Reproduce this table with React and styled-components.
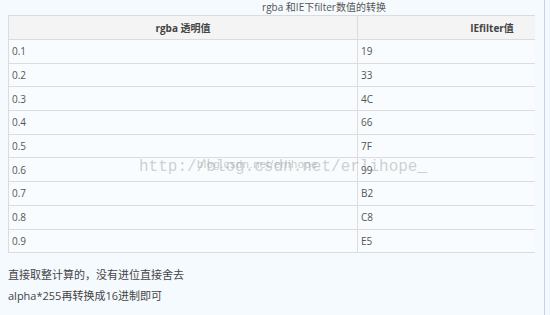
import React from 'react';
import styled, { createGlobalStyle } from 'styled-components';

const GlobalStyle = createGlobalStyle`
  html, body {
    margin: 0;
    padding: 0;
    background: #f5faff;
  }
  body {
    font-family: "Open Sans", "Noto Sans CJK SC", sans-serif;
    color: #555;
  }
`;

const Page = styled.div`
  position: relative;
  width: 550px;
  height: 315px;
  overflow: hidden;
  background: #f5faff;
  border-right: 1px solid #eef4fb;
  box-sizing: border-box;
`;

const ScrollEdge = styled.div`
  position: absolute;
  top: 0;
  bottom: 0;
  left: 544px;
  width: 1px;
  background: #c5d5f0;
`;

const Content = styled.div`
  width: 527px;
  padding: 0 0 0 8px;
  overflow: hidden;
`;

const Caption = styled.div`
  width: 616px;
  padding-left: 16px;
  box-sizing: border-box;
  text-align: center;
  font-size: 10px;
  line-height: 15px;
  height: 15px;
  color: #555;
`;

const Table = styled.table`
  width: 616px;
  border-collapse: collapse;
  table-layout: fixed;
  font-size: 10px;
  color: #555;
`;

const Head = styled.th`
  height: 23px;
  padding: 0;
  background: #f4f4f4;
  border: 1px solid #dcdcdc;
  font-weight: bold;
  color: #444;
  text-align: center;
  width: ${p => p.$w}px;
`;

const Cell = styled.td`
  height: 22.7px;
  padding: 0 0 0 3px;
  border: 1px solid #dcdcdc;
  background: #f8fcff;
  text-align: left;
`;

const Notes = styled.div`
  padding: 11px 0 0 8px;
  font-size: 11px;
  line-height: 21px;
  color: #444;
`;

const Watermark = styled.div`
  position: absolute;
  left: 139px;
  top: 158px;
  font-family: "Liberation Mono", monospace;
  font-size: 16px;
  color: rgba(150, 150, 150, 0.45);
  white-space: nowrap;
  pointer-events: none;
`;

const WatermarkSmall = styled.div`
  position: absolute;
  left: 197px;
  top: 158px;
  font-family: "Liberation Sans", sans-serif;
  font-size: 11px;
  letter-spacing: 0.6px;
  color: rgba(150, 150, 150, 0.5);
  white-space: nowrap;
  pointer-events: none;
`;

const rows = [
  ['0.1', '19'],
  ['0.2', '33'],
  ['0.3', '4C'],
  ['0.4', '66'],
  ['0.5', '7F'],
  ['0.6', '99'],
  ['0.7', 'B2'],
  ['0.8', 'C8'],
  ['0.9', 'E5'],
];

const App = () => {
  return (<>
    <GlobalStyle />
    <Page>
      <Content>
        <Caption>{'rgba 和IE下filter数值的转换'}</Caption>
        <Table>
          <thead>
            <tr>
              <Head $w={348}>{'rgba 透明值'}</Head>
              <Head $w={268}>{'IEfilter值'}</Head>
            </tr>
          </thead>
          <tbody>
            {rows.map(([a, b]) => (
              <tr key={a}>
                <Cell>{a}</Cell>
                <Cell>{b}</Cell>
              </tr>
            ))}
          </tbody>
        </Table>
      </Content>
      <Notes>
        <div>{'直接取整计算的，没有进位直接舍去'}</div>
        <div>{'alpha*255再转换成16进制即可'}</div>
      </Notes>
      <Watermark>{'http://blog.csdn.net/erlihope_'}</Watermark>
      <WatermarkSmall>{'blog.csdn.net/erlihope'}</WatermarkSmall>
      <ScrollEdge />
    </Page>
  </>);
};

export default App;
